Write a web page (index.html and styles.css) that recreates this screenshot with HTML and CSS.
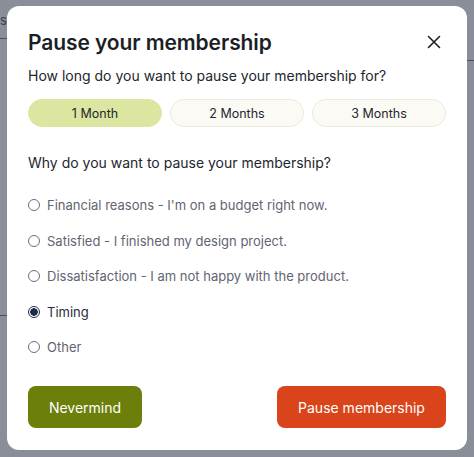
FILE: index.html
```html
<!DOCTYPE html>
<html lang="en">
<head>
<meta charset="utf-8">
<title>Pause your membership</title>
<link rel="stylesheet" href="styles.css">
</head>
<body>
<div class="backdrop">
  <span class="frag frag-s">s</span>
  <span class="frag-line l1"></span>
  <span class="frag-line l2"></span>
  <span class="frag-line l3"></span>
</div>
<div class="modal">
  <div class="modal-head">
    <h1 class="title">Pause your membership</h1>
    <button class="close" aria-label="Close">
      <svg width="14" height="14" viewBox="0 0 14 14"><path d="M1.5 1.5 L12.5 12.5 M12.5 1.5 L1.5 12.5" stroke="#1c1f26" stroke-width="1.6" stroke-linecap="round" fill="none"/></svg>
    </button>
  </div>
  <p class="question">How long do you want to pause your membership for?</p>
  <div class="pills">
    <button class="pill active">1 Month</button>
    <button class="pill">2 Months</button>
    <button class="pill">3 Months</button>
  </div>
  <p class="question q2">Why do you want to pause your membership?</p>
  <div class="reasons">
    <label class="reason"><span class="radio"></span><span>Financial reasons - I'm on a budget right now.</span></label>
    <label class="reason"><span class="radio"></span><span>Satisfied - I finished my design project.</span></label>
    <label class="reason"><span class="radio"></span><span>Dissatisfaction - I am not happy with the product.</span></label>
    <label class="reason checked"><span class="radio"></span><span>Timing</span></label>
    <label class="reason"><span class="radio"></span><span>Other</span></label>
  </div>
  <div class="actions">
    <button class="btn btn-olive">Nevermind</button>
    <button class="btn btn-red">Pause membership</button>
  </div>
</div>
</body>
</html>
```
FILE: styles.css
```css
* { box-sizing: border-box; }
html, body { margin: 0; padding: 0; }
body {
  width: 474px;
  height: 457px;
  background: #8a8e99;
  font-family: "Inter", "Open Sans", sans-serif;
  position: relative;
  overflow: hidden;
  padding: 6px 0 0 7px;
}
.backdrop { position: absolute; inset: 0; }
.frag { position: absolute; color: #3a3e48; font-size: 13px; line-height: 16px; }
.frag-s { left: 0; top: 12px; }
.frag-line { position: absolute; height: 1px; background: #4a4e58; }
.l1 { left: 0; top: 38px; width: 7px; }
.l2 { left: 0; top: 315px; width: 7px; }
.l3 { right: 0; top: 60px; width: 7px; }

.modal {
  position: relative;
  width: 460px;
  height: 444px;
  background: #fff;
  border-radius: 12px;
  padding: 21px 21px 0 21px;
  display: flex;
  flex-direction: column;
}
.modal-head {
  display: flex;
  align-items: center;
  justify-content: space-between;
  height: 30px;
}
.title {
  margin: 0;
  font-size: 21px;
  font-weight: 600;
  color: #1c1f26;
  letter-spacing: -0.1px;
}
.close {
  border: 0;
  background: none;
  padding: 0;
  margin-right: 5px;
  width: 14px;
  height: 14px;
  display: flex;
}
.question {
  margin: 9px 0 0;
  font-size: 14px;
  line-height: 20px;
  color: #23262d;
}
.q2 { margin-top: 26px; }
.pills {
  display: grid;
  grid-template-columns: repeat(3, 1fr);
  gap: 8px;
  margin-top: 13px;
}
.pill {
  height: 28px;
  border-radius: 14px;
  border: 1px solid #ece9df;
  background: #fbfaf5;
  font-family: inherit;
  font-size: 12.5px;
  color: #23262d;
}
.pill.active {
  background: #dce6a0;
  border-color: #dce6a0;
}
.reasons {
  margin-top: 22px;
  display: flex;
  flex-direction: column;
  gap: 15.5px;
}
.reason {
  display: flex;
  align-items: center;
  gap: 7px;
  height: 20px;
  font-size: 13px;
  color: #5f6571;
}
.radio {
  width: 12px;
  height: 12px;
  border-radius: 50%;
  border: 1px solid #6a6f7b;
  background: #fff;
  flex: none;
}
.reason.checked { color: #2a2d35; }
.reason.checked .radio {
  border: 1.5px solid #1e2a48;
  background: radial-gradient(circle, #1e2a48 0 3.5px, #fff 4px);
}
.actions {
  margin-top: auto;
  margin-bottom: 22px;
  display: flex;
  justify-content: space-between;
}
.btn {
  height: 42px;
  border: 0;
  border-radius: 8px;
  font-family: inherit;
  font-size: 14px;
  color: #fff;
}
.btn-olive { width: 114px; background: #6b7f0a; }
.btn-red { width: 169px; background: #d9441a; }
```
